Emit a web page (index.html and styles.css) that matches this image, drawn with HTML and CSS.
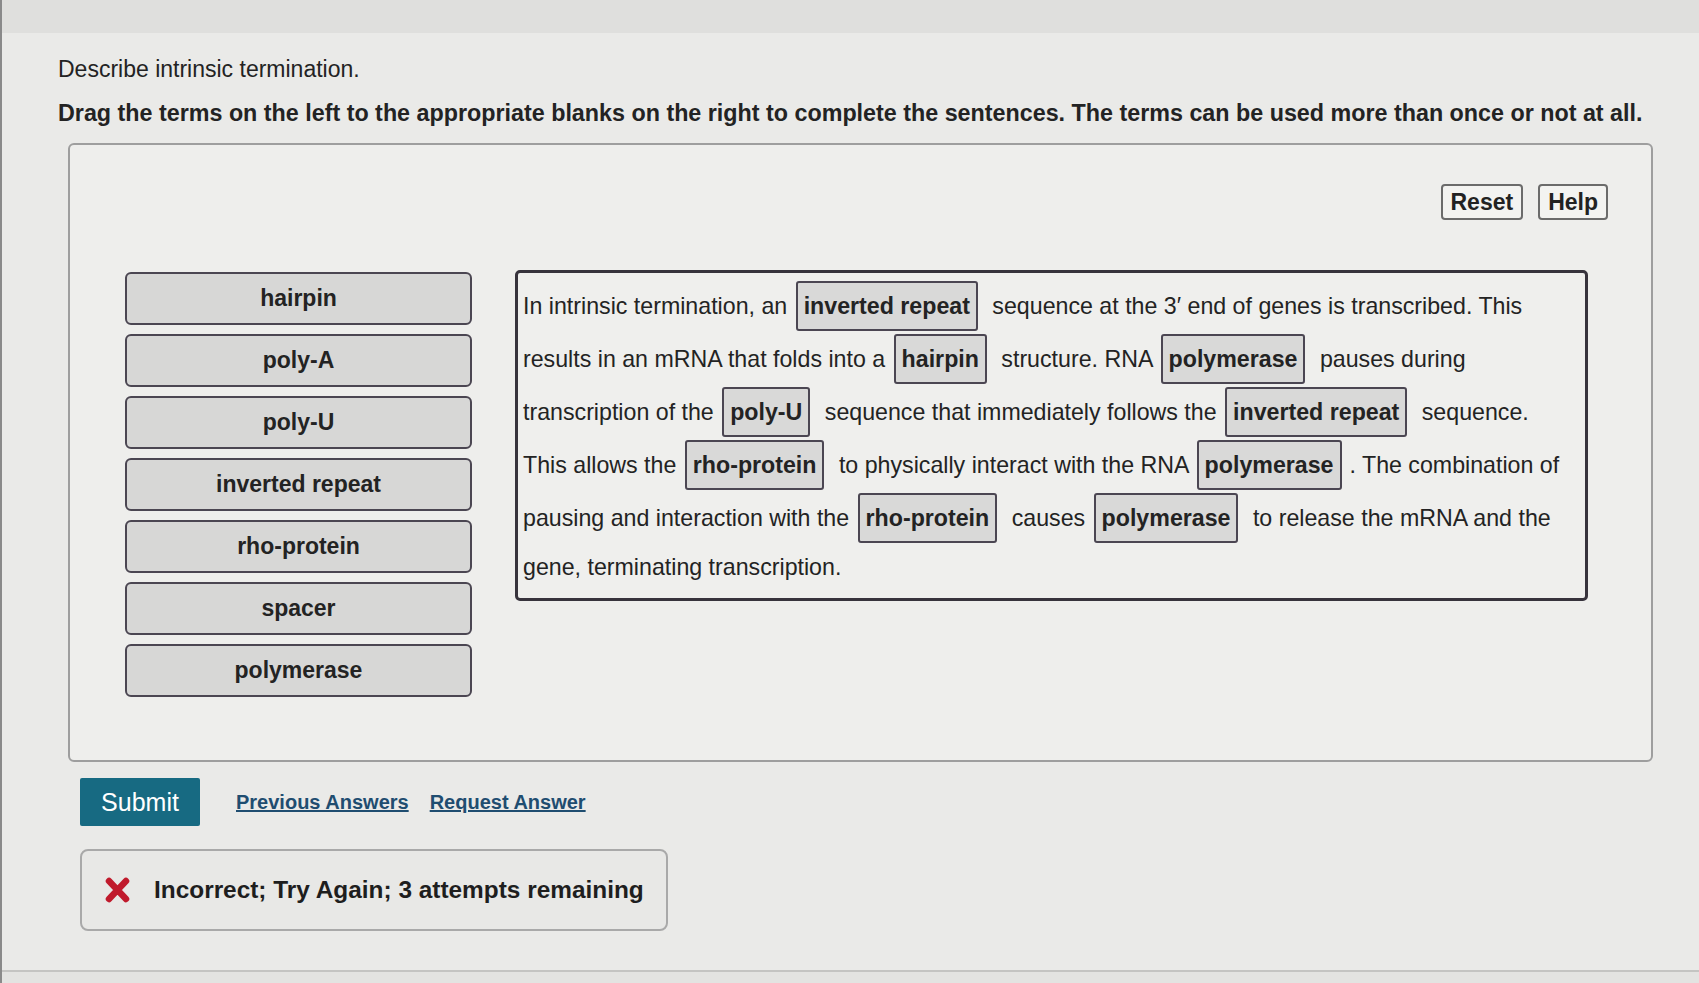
FILE: index.html
```html
<!DOCTYPE html>
<html lang="en">
<head>
<meta charset="utf-8">
<title>Describe intrinsic termination</title>
<link rel="stylesheet" href="styles.css">
</head>
<body>
<div class="topband"></div>
<main class="page">
  <p class="prompt">Describe intrinsic termination.</p>
  <p class="instr">Drag the terms on the left to the appropriate blanks on the right to complete the sentences. The terms can be used more than once or not at all.</p>
  <section class="panel">
    <div class="toolbar">
      <button class="tbtn">Reset</button>
      <button class="tbtn">Help</button>
    </div>
    <div class="workarea">
      <ul class="terms">
        <li class="term">hairpin</li>
        <li class="term">poly-A</li>
        <li class="term">poly-U</li>
        <li class="term">inverted repeat</li>
        <li class="term">rho-protein</li>
        <li class="term">spacer</li>
        <li class="term">polymerase</li>
      </ul>
      <div class="sentences">
        <p class="text">In intrinsic termination, an <span class="blank">inverted repeat</span> sequence at the 3′ end of genes is transcribed. This<br>results in an mRNA that folds into a <span class="blank">hairpin</span> structure. RNA <span class="blank">polymerase</span> pauses during<br>transcription of the <span class="blank">poly-U</span> sequence that immediately follows the <span class="blank">inverted repeat</span> sequence.<br>This allows the <span class="blank">rho-protein</span> to physically interact with the RNA <span class="blank">polymerase</span>. The combination of<br>pausing and interaction with the <span class="blank">rho-protein</span> causes <span class="blank">polymerase</span> to release the mRNA and the<br>gene, terminating transcription.</p>
      </div>
    </div>
  </section>
  <div class="actions">
    <button class="submit">Submit</button>
    <a class="link" href="#">Previous Answers</a>
    <a class="link" href="#">Request Answer</a>
  </div>
  <div class="feedback">
    <svg class="xicon" width="25" height="26" viewBox="0 0 25 26" aria-hidden="true">
      <path d="M4 4 L21 22 M21 4 L4 22" stroke="#c01a2c" stroke-width="6.5" stroke-linecap="round" fill="none"/>
    </svg>
    <span class="fbtext">Incorrect; Try Again; 3 attempts remaining</span>
  </div>
</main>
<div class="footer"></div>
</body>
</html>
```
FILE: styles.css
```css
html, body {
  margin: 0;
  padding: 0;
}
body {
  height: 983px;
  overflow: hidden;
  display: flex;
  flex-direction: column;
  background: #eaeae8;
  border-left: 2px solid #8a8a8a;
  box-sizing: border-box;
  font-family: "Liberation Sans", Arial, sans-serif;
  color: #232323;
}
.topband {
  height: 33px;
  background: #dfdfdd;
  flex: none;
}
.page {
  padding-left: 56px;
  flex: none;
}
.prompt {
  margin: 23px 0 0 0;
  font-size: 23px;
  line-height: 26px;
}
.instr {
  margin: 18px 0 0 0;
  font-size: 23.3px;
  line-height: 26px;
  font-weight: bold;
  white-space: nowrap;
}
.panel {
  margin: 17px 0 0 10px;
  width: 1585px;
  box-sizing: border-box;
  border: 2px solid #9e9e9e;
  border-radius: 6px;
  background: #eeeeec;
  padding: 39px 43px 63px 55px;
}
.toolbar {
  display: flex;
  justify-content: flex-end;
  gap: 15px;
}
.tbtn {
  font-family: "Liberation Sans", Arial, sans-serif;
  font-size: 23px;
  font-weight: bold;
  color: #222;
  height: 36px;
  padding: 0 8px;
  background: #f3f3f1;
  border: 2px solid #6b6b6b;
  border-radius: 4px;
}
.workarea {
  display: flex;
  align-items: flex-start;
  gap: 43px;
  margin-top: 50px;
}
.terms {
  list-style: none;
  margin: 2px 0 0 0;
  padding: 0;
  width: 347px;
  display: flex;
  flex-direction: column;
  gap: 9px;
}
.term {
  height: 53px;
  box-sizing: border-box;
  border: 2px solid #4b4652;
  border-radius: 6px;
  background: #d7d7d6;
  font-size: 23px;
  font-weight: bold;
  display: flex;
  align-items: center;
  justify-content: center;
}
.sentences {
  width: 1073px;
  box-sizing: border-box;
  border: 3px solid #37333c;
  border-radius: 5px;
  background: #efefed;
  padding: 6px 5px 8px 5px;
}
.text {
  margin: 0;
  font-size: 23.2px;
  line-height: 46px;
  white-space: nowrap;
}
.blank {
  display: inline-block;
  vertical-align: baseline;
  height: 46px;
  line-height: 46px;
  margin: 1.5px 8px 1.5px 2px;
  padding: 0 6px;
  border: 2px solid #4b4652;
  border-radius: 3px;
  background: #d9d9d8;
  font-weight: bold;
}
.actions {
  display: flex;
  align-items: center;
  margin: 16px 0 0 22px;
}
.submit {
  font-family: "Liberation Sans", Arial, sans-serif;
  font-size: 25px;
  color: #ffffff;
  background: #176a82;
  border: none;
  border-radius: 2px;
  width: 120px;
  height: 48px;
  margin-right: 36px;
}
.link {
  font-size: 20px;
  font-weight: bold;
  color: #1f4d70;
  text-decoration: underline;
  margin-right: 21px;
}
.feedback {
  margin: 23px 0 0 22px;
  width: 588px;
  height: 82px;
  box-sizing: border-box;
  border: 2px solid #a9a9a9;
  border-radius: 8px;
  background: #e8e8e6;
  display: flex;
  align-items: center;
  padding-left: 23px;
  gap: 24px;
}
.xicon {
  flex: none;
}
.fbtext {
  font-size: 24.4px;
  font-weight: bold;
  color: #1e1e1e;
}
.footer {
  margin-top: auto;
  height: 11px;
  border-top: 2px solid #c4c4c2;
  background: #e3e3e1;
  flex: none;
}
```
